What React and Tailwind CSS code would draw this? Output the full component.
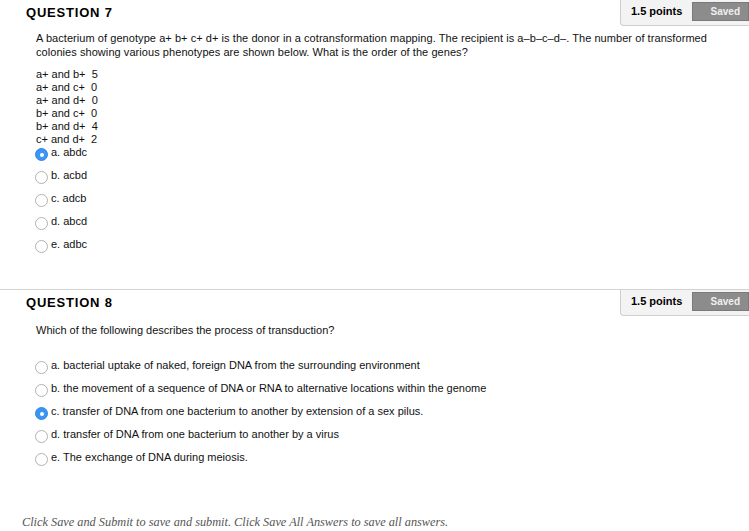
import React from 'react';

const Radio = ({ checked }) =>
    checked ? (
        <span className="mt-[2px] w-[13px] h-[13px] rounded-full bg-[#3a95f5] border border-[#2f86e8] flex items-center justify-center shrink-0">
            <span className="w-[4px] h-[4px] rounded-full bg-white" />
        </span>
    ) : (
        <span className="mt-[2px] w-[13px] h-[13px] rounded-full border border-[#b3b3b3] bg-white shrink-0" />
    );

const Option = ({ label, checked }) => (
    <div className="flex items-start h-[13px] pl-[35px]">
        <Radio checked={checked} />
        <span className="ml-[3px] leading-[13px] whitespace-nowrap">{label}</span>
    </div>
);

const Points = () => (
    <div className="w-[129px] h-[26px] bg-[#f3f3f3] border-l border-b border-[#cfcfcf] rounded-bl-[4px] flex items-start">
        <span className="ml-[10px] mt-[4px] text-[11px] leading-[14px] font-bold text-black">1.5 points</span>
        <span className="ml-auto mt-[2px] w-[57px] h-[19px] bg-[#8c8c8c] border border-[#7a7a7a] flex items-center justify-end pr-[8px] text-[10px] font-bold text-[#f0f0f0]">
            Saved
        </span>
    </div>
);

const Header = ({ title }) => (
    <div className="flex justify-between items-start h-[26px]">
        <h2 className="pl-[26px] pt-[6px] text-[13px] leading-[14px] font-bold tracking-[0.8px] text-black">{title}</h2>
        <Points />
    </div>
);

const genes = ['a+ and b+  5', 'a+ and c+  0', 'a+ and d+  0', 'b+ and c+  0', 'b+ and d+  4', 'c+ and d+  2'];

export default function App() {
    return (
        <div className="w-[749px] h-[531px] bg-white text-[11px] text-[#111] overflow-hidden" style={{ fontFamily: '"Liberation Sans", Arial, sans-serif' }}>
            <section>
                <Header title="QUESTION 7" />
                <p className="mt-[5px] pl-[36px] w-[728px] leading-[14px] tracking-[0.06px]">
                    A bacterium of genotype a+ b+ c+ d+ is the donor in a cotransformation mapping. The recipient is a–b–c–d–. The number of transformed colonies showing various phenotypes are shown below. What is the order of the genes?
                </p>
                <div className="mt-[9px] pl-[36px] leading-[13px]">
                    {genes.map((g) => (
                        <div key={g} className="whitespace-pre">{g}</div>
                    ))}
                </div>
                <div className="flex flex-col gap-[10px]">
                    <Option label="a. abdc" checked />
                    <Option label="b. acbd" />
                    <Option label="c. adcb" />
                    <Option label="d. abcd" />
                    <Option label="e. adbc" />
                </div>
            </section>

            <section className="mt-[38px] border-t border-[#d3d3d3]">
                <Header title="QUESTION 8" />
                <p className="mt-[7px] pl-[36px] leading-[14px]">Which of the following describes the process of transduction?</p>
                <div className="mt-[22px] flex flex-col gap-[10px]">
                    <Option label="a. bacterial uptake of naked, foreign DNA from the surrounding environment" />
                    <Option label="b. the movement of a sequence of DNA or RNA  to alternative locations within the genome" />
                    <Option label="c. transfer of DNA from one bacterium to another by extension of a sex pilus." checked />
                    <Option label="d. transfer of DNA from one bacterium to another by a virus" />
                    <Option label="e. The exchange of DNA during meiosis." />
                </div>
            </section>

            <p className="mt-[51px] pl-[22px] text-[12.3px] leading-[14px] italic text-[#555]" style={{ fontFamily: '"Liberation Serif", "Times New Roman", serif' }}>
                Click Save and Submit to save and submit. Click Save All Answers to save all answers.
            </p>
        </div>
    );
}
